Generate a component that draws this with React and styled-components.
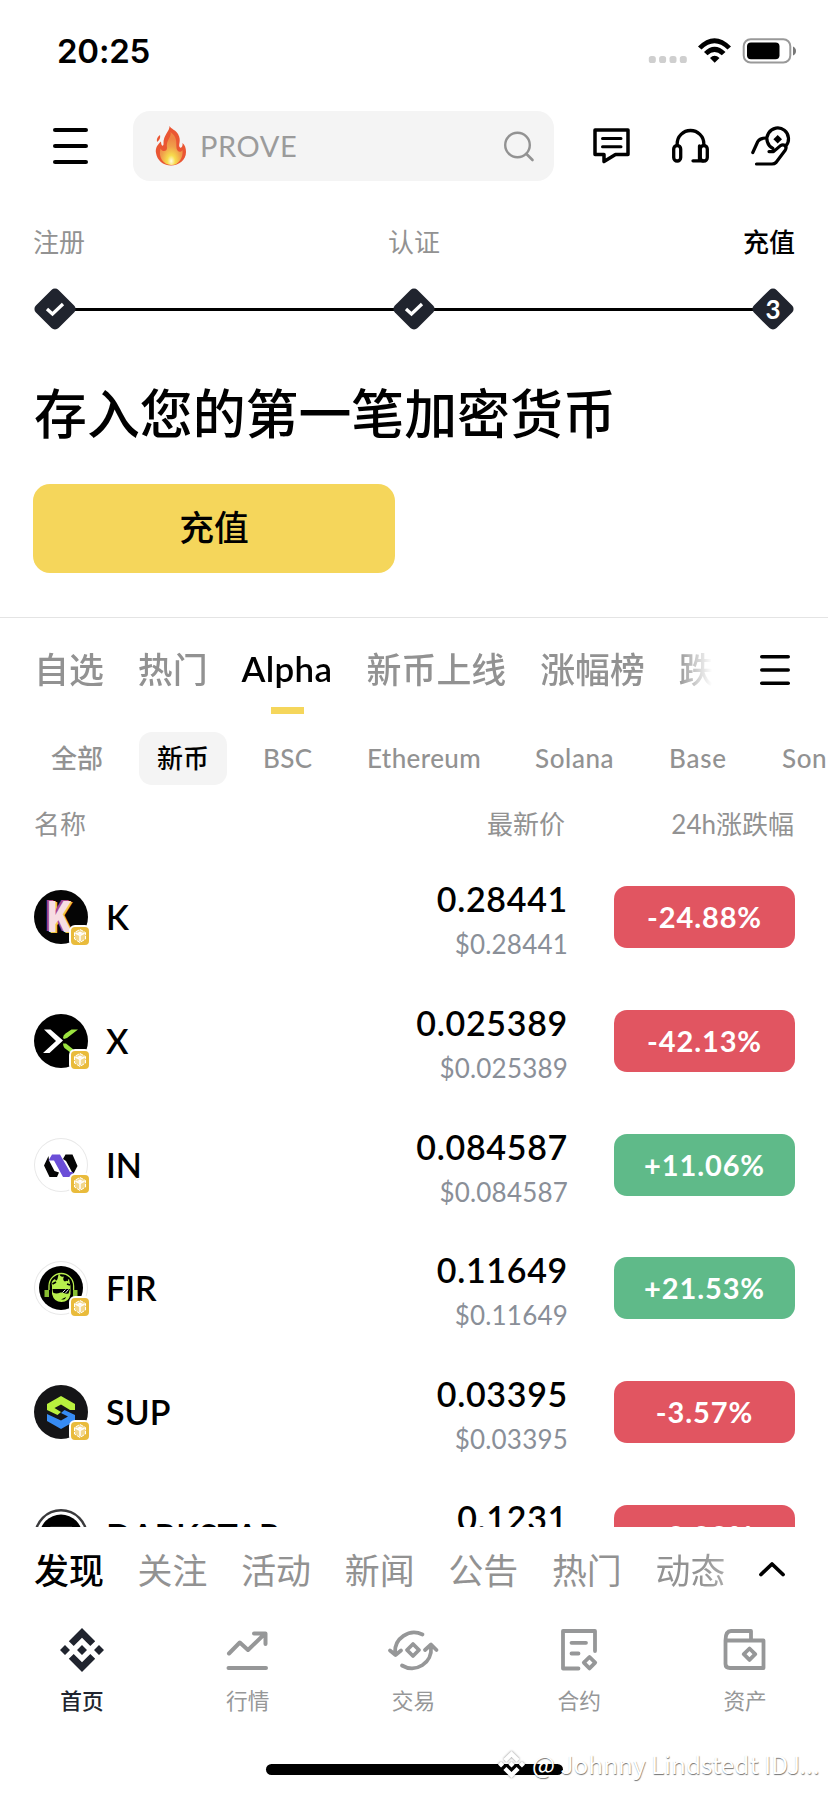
import React from "react";
import styled, { createGlobalStyle, css } from "styled-components";

const Global = createGlobalStyle`
  * { box-sizing: border-box; }
  body { margin: 0; background: #fff; }
  svg { display: block; flex: none; overflow: visible; }
  button { border: 0; padding: 0; background: none; font: inherit; color: inherit; }
`;

const cjk = `"Noto Sans CJK SC", sans-serif`;
const latin = `Lato, "Noto Sans CJK SC", sans-serif`;
const grey = "#929292";

const Screen = styled.div`
  width: 828px;
  height: 1793px;
  overflow: hidden;
  position: relative;
  background: #fff;
  color: #000;
  font-family: ${cjk};
  display: flex;
  flex-direction: column;
`;

const StatusBar = styled.header`
  height: 102px;
  flex: none;
  display: flex;
  justify-content: space-between;
  padding: 0 31px 0 57px;
`;
const Clock = styled.div`
  font: 580 33px/102px Inter, sans-serif;
  letter-spacing: -0.2px;
`;

const TopBar = styled.div`
  height: 88px;
  flex: none;
  display: flex;
  align-items: center;
  padding-left: 53px;
`;
const SearchBox = styled.div`
  width: 421px;
  height: 70px;
  margin: 0 39px 0 45px;
  padding: 0 20px 0 22px;
  border-radius: 17px;
  background: #f4f4f4;
  display: flex;
  align-items: center;
`;
const SearchText = styled.span`
  flex: 1;
  margin-left: 13px;
  font: 400 29px/70px ${latin};
  letter-spacing: 0.6px;
  color: #9b9b9b;
`;
const Actions = styled.div`
  display: flex;
  align-items: center;
  gap: 42px;
`;

const Onboarding = styled.section`
  height: 428px;
  flex: none;
  padding: 32px 33px 0;
  border-bottom: 1px solid #e4e4e4;
`;
const StepLabels = styled.div`
  display: grid;
  grid-template-columns: 1fr 1fr 1fr;
  font-size: 26px;
  line-height: 38px;
  color: ${grey};
`;
const StepLabel = styled.span`
  text-align: ${(p) => p.$align};
  ${(p) => p.$current && css`color: #000; font-weight: 500;`}
`;
const StepTrack = styled.div`
  display: flex;
  align-items: center;
  height: 42px;
  margin: 28px 1px 0 1px;
`;
const StepLine = styled.div`
  flex: 1;
  height: 3px;
  margin: 0 -2px;
  background: #000;
`;
const StepMark = styled.div`
  width: 42px;
  height: 42px;
  display: grid;
  place-items: center;
  > * { grid-area: 1 / 1; }
`;
const Rhomb = styled.span`
  width: 32px;
  height: 32px;
  border-radius: 5px;
  background: #20242e;
  transform: rotate(45deg);
`;
const StepNumber = styled.span`
  z-index: 1;
  color: #fff;
  font: 700 26px/42px ${latin};
`;
const Title = styled.h1`
  margin: 43px 0 0 1px;
  font-size: 52.9px;
  line-height: 76px;
  font-weight: 500;
  white-space: nowrap;
`;
const DepositButton = styled.button`
  display: block;
  width: 362px;
  height: 89px;
  margin-top: 35px;
  border-radius: 17px;
  background: #f5d65b;
  font: 500 34.8px/84px ${cjk};
  padding-bottom: 5px;
  text-align: center;
`;

const MarketTabs = styled.nav`
  height: 107px;
  flex: none;
  display: flex;
  padding-left: 34px;
  font-size: 34.9px;
  line-height: 100px;
  color: ${grey};
`;
const TabStrip = styled.div`
  display: flex;
  gap: 34px;
  width: 679px;
  overflow: hidden;
  mask-image: linear-gradient(90deg, #000 643px, transparent 678px);
`;
const Tab = styled.span`
  flex: none;
  font-weight: ${(p) => (p.$active ? 600 : 500)};
  ${(p) => p.$active && css`
    color: #000;
    font-family: ${latin};
    line-height: 102px;
    letter-spacing: 0.3px;
    width: 91px;
    position: relative;
    &::after {
      content: "";
      position: absolute;
      left: 29px;
      bottom: 11px;
      width: 33px;
      height: 7px;
      background: #f5d65b;
    }
  `}
`;
const TabMenu = styled.button`
  margin: 37px 0 0 47px;
  height: 30px;
  color: #000;
`;

const Filters = styled.div`
  display: flex;
  flex: none;
  gap: 18px;
  height: 66px;
  padding: 7px 0 0 33px;
`;
const Pill = styled.span`
  flex: none;
  height: 53px;
  padding: 0 18px;
  border-radius: 13px;
  font: 500 26px/53px ${latin};
  letter-spacing: ${(p) => p.$ls || 0}px;
  width: ${(p) => p.$w}px;
  color: ${grey};
  white-space: nowrap;
  ${(p) => p.$active && css`background: #f4f4f4; color: #000;`}
`;

const TableHead = styled.div`
  height: 65px;
  flex: none;
  padding: 0 34px;
  display: grid;
  grid-template-columns: 1fr 262px 229px;
  font: 400 26px/66px ${latin};
  color: ${grey};
  > :not(:first-child) { text-align: right; }
`;

const List = styled.div`
  height: 671px;
  flex: none;
  overflow: hidden;
`;
const Row = styled.div`
  height: 123.7px;
  padding: 0 33px 1px 34px;
  display: grid;
  grid-template-columns: 72px minmax(0, 1fr) 301px 226px;
  align-items: center;
`;
const Coin = styled.div`
  position: relative;
  width: 54px;
  height: 54px;
`;
const ChainBadge = styled.span`
  position: absolute;
  left: 35px;
  top: 35px;
  width: 22px;
  height: 22px;
  border: 2px solid #fff;
  border-radius: 6px;
  background: #e9bb3b;
`;
const Disc = styled.div`
  width: 54px;
  height: 54px;
  border-radius: 50%;
  overflow: hidden;
  background: ${(p) => p.$bg};
  ${(p) => p.$ring && css`box-shadow: inset 0 0 0 1px #e8e8e8;`}
  display: grid;
  place-items: center;
`;
const KMark = styled.span`
  font: 900 42px/54px Inter, sans-serif;
  transform: translate(-1px, 0) scaleX(0.78);
  color: #f7dde2;
  text-shadow: -3px -1px 0 #a9468a, 2px 1px 0 #edc545;
`;
const Symbol = styled.span`
  font: 600 34px/54px ${latin};
  white-space: nowrap;
`;
const Quote = styled.div`
  display: flex;
  flex-direction: column;
  align-items: flex-end;
  padding: 8px 1px 0 0;
`;
const Price = styled.span`
  font: 600 34px/46px ${latin};
  letter-spacing: 0.7px;
`;
const Fiat = styled.span`
  font: 400 26px/44px ${latin};
  letter-spacing: 0.2px;
  color: #8a8f98;
`;
const Change = styled.span`
  justify-self: end;
  width: 181px;
  height: 62px;
  border-radius: 13px;
  background: ${(p) => (p.$up ? "#5fba89" : "#e15561")};
  color: #fff;
  font: 700 29px/62px ${latin};
  letter-spacing: 0.9px;
  text-align: center;
`;

const FeedTabs = styled.nav`
  height: 84px;
  flex: none;
  display: flex;
  gap: 33.8px;
  padding-left: 34px;
  font-size: 34.9px;
  line-height: 84px;
  color: ${grey};
`;
const FeedTab = styled.span`
  ${(p) => p.$active && css`color: #000; font-weight: 500;`}
  ${(p) => p.$fade && css`
    background: linear-gradient(90deg, ${grey} 60%, #aaa);
    background-clip: text;
    color: transparent;
  `}
`;

const BottomNav = styled.nav`
  flex: none;
  height: 153px;
  display: grid;
  grid-template-columns: repeat(5, 1fr);
  padding-top: 17px;
  margin-left: -1px;
`;
const NavItem = styled.div`
  display: flex;
  flex-direction: column;
  align-items: center;
  gap: 13px;
  font-size: 21.7px;
  line-height: 30px;
  color: ${(p) => (p.$active ? "#20242e" : "#969798")};
  font-weight: ${(p) => (p.$active ? 500 : 400)};
`;
const HomeBar = styled.div`
  flex: none;
  width: 297px;
  height: 11px;
  border-radius: 6px;
  background: #000;
  margin-left: 266px;
`;
const Watermark = styled.div`
  position: absolute;
  left: 498px;
  top: 1746px;
  display: flex;
  align-items: center;
  gap: 7px;
  color: #fff;
  font: 400 24.4px/36px ${cjk};
  white-space: nowrap;
  text-shadow: 0.5px 0.5px 1px rgba(0, 0, 0, 0.55);
  svg { filter: drop-shadow(0.5px 0.5px 1px rgba(0, 0, 0, 0.5)); }
`;

const stroke = (w, c = "currentColor") => ({
  fill: "none", stroke: c, strokeWidth: w, strokeLinecap: "round", strokeLinejoin: "round",
});

const StatusIcons = () => (
  <svg width="148" height="102" viewBox="649 0 148 102">
    {[652.3, 662.6, 673, 683.3].map((x) => (
      <rect key={x} x={x - 3.5} y="56" width="7" height="7" rx="2.6" fill="#cfcfcf" />
    ))}
    <path d="M698 46.5Q714.500 30 731 46.500L727.500 49.500Q714.500 37 701.500 49.500ZM704 52Q714.500 41.500 725.500 52L721.800 55.300Q714.500 48.500 707.500 55.300ZM710 58Q714.500 53.500 719.500 58L714.700 62.800Z" fill="#000" />
    <rect x="743.700" y="39.200" width="46.600" height="23.300" rx="7" fill="none" stroke="#999" strokeWidth="2" />
    <rect x="747" y="42.500" width="32.500" height="16.700" rx="4" fill="#000" />
    <path d="M793 46.500q3 1.500 3 4.500t-3 4.500z" fill="#777" />
  </svg>
);

const MenuIcon = ({ w, h, t }) => (
  <svg width={w} height={h}>
    {[t / 2, h / 2, h - t / 2].map((y) => (
      <path key={y} d={`M${t / 2} ${y}H${w - t / 2}`} {...stroke(t)} />
    ))}
  </svg>
);

const Flame = () => (
  <svg width="32" height="40" viewBox="0 0 32 40">
    <defs>
      <radialGradient id="fl" cx=".5" cy=".88" r=".8">
        <stop offset="0" stopColor="#fffbe0" />
        <stop offset=".22" stopColor="#f7dc4d" />
        <stop offset=".55" stopColor="#f0a04b" />
        <stop offset=".85" stopColor="#ee8544" />
      </radialGradient>
    </defs>
    <path d="M14.500 0C15 5 8 9 8.500 18C8.500 21 6 20 6 15.500C3 18 0 22 1 27C2 34 8 39.500 16 39.500S31 34 31 26C31 22 30 19 27.500 17C28 20 26.500 22.500 25 21.500C22.500 19 27 15 23 8C21 4 16 3 14.500 0Z" fill="#ea5633" />
    <path d="M15.500 6C17 11 10.500 14 12 22C12 26 7 26 5.500 22.500C3 31 8 38.500 16 39S28.500 31 27.500 24C26 27 22 26 21.500 22C21 16 22.500 11 15.500 6Z" fill="url(#fl)" />
    <path d="M5 9q-4 3-3 7q4-3 3-7z" fill="#ea5633" />
  </svg>
);

const SearchIcon = () => (
  <svg width="30" height="30" viewBox="0 0 30 30">
    <circle cx="13.500" cy="14" r="12.300" {...stroke(2.4, "#929292")} />
    <path d="M22.500 23L28.500 29" {...stroke(2.6, "#929292")} />
  </svg>
);
const ChatIcon = () => (
  <svg width="37" height="36" viewBox="0 0 37 36">
    <path d="M2 2H35V26.500H22.500L11 33.500V26.500H2Z" {...stroke(3.5)} />
    <path d="M9.500 10.500H28M9.500 18.800H28" {...stroke(3)} />
  </svg>
);
const HeadsetIcon = () => (
  <svg width="37" height="34" viewBox="0 0 37 34">
    <rect x="1.700" y="16.500" width="7" height="15.500" rx="3.500" {...stroke(3.3)} />
    <rect x="28.300" y="16.500" width="7" height="15.500" rx="3.500" {...stroke(3.3)} />
    <path d="M5.200 16V14.500A13.300 13 0 0 1 31.800 14.500V16M27.500 17V31.800M21 31.800H31" {...stroke(3.3)} />
  </svg>
);
const HandIcon = () => (
  <svg width="39" height="39" viewBox="0 0 39 39">
    <path d="M34.500 19.300A10.800 10.800 0 1 0 22 21.500" {...stroke(3.2)} />
    <path d="M26.700 7.900L31 12.200L26.700 16.500L22.400 12.200Z" fill="#000" />
    <path d="M1.800 25.500L6.800 14.500Q9 11 15 11M18 24.600H22.500L29.500 18.600Q32 17.200 34.300 18.800Q36 20.500 34 23.500L25 35.500Q23.500 37 21 37H5.500" {...stroke(3.2)} />
  </svg>
);
const Tick = styled.svg`
  z-index: 1;
`;
const Check = () => (
  <Tick width="20" height="16" viewBox="0 0 20 16">
    <path d="M2 8L7.500 13L18 3" fill="none" stroke="#fff" strokeWidth="3.300" />
  </Tick>
);
const Cube = () => (
  <svg width="18" height="18" viewBox="0 0 18 18">
    <path d="M9 2.500L14.500 5.500V12L9 15.500L3.500 12V5.500Z" fill="#fff" fillOpacity=".4" stroke="#fff" strokeWidth="1" strokeDasharray="3.800 1" />
    <path d="M4.500 6L9 8.500L13.500 6M9 8.500V14" fill="none" stroke="#fff" strokeWidth="1.500" />
    <path d="M9 4.500L12 6L9 7.500L6 6Z" fill="#fff" />
  </svg>
);

const marks = {
  K: <Disc $bg="#050505"><KMark>K</KMark></Disc>,
  X: (
    <Disc $bg="#000">
      <svg width="54" height="54">
        <path d="M10 15.500H16.500L29 26.500L15.500 39H9L22 27Z" fill="#fff" />
        <path d="M29 24Q29 21 31.500 19.500L37.500 15.500H44L33 24L30 25ZM29 29.500H32L40 36L37 39L30.500 34Q29 32 29 29.500Z" fill="#9be33f" />
      </svg>
    </Disc>
  ),
  IN: (
    <Disc $bg="#fff" $ring>
      <svg width="54" height="54">
        <path d="M14.500 18L10 27.500L15.500 39H23L25 34.500L20.500 33L15 22.500ZM29 21L31.500 16.500H38.500L43.500 28L38 38.500L35 34H38L32 23Z" fill="#050505" />
        <path d="M14.500 22.500L18 16.500H26L36 34H39.500L37 39H29L20 22.500Z" fill="#6b4ed8" />
      </svg>
    </Disc>
  ),
  FIR: (
    <Disc $bg="#fff" $ring>
      <svg width="54" height="54">
        <circle cx="27" cy="27" r="22" fill="#000" />
        <path d="M15 29V25A12.300 12.500 0 0 1 39.600 25V29" fill="none" stroke="#b9ef4d" strokeWidth="1.300" />
        <path d="M10.500 29h4.500v7h-4.500zM39 29h4.500v7h-4.500z" fill="#87bd32" />
        <path d="M18 33V25Q16.500 20 21 18Q22 21 23.500 18L25 11.500Q26 17 30 15.500Q28 19 31 20.500L35 18L36.500 25V33Q35 41 27.500 41T18 33Z" fill="#b9ef4d" />
        <path d="M18.500 28H36L34.500 32.500Q31 33 28.500 31.500H26.500Q22 33.500 19 31.500ZM27 38.500L32 36Q31.500 39 27 38.500Z" fill="#000" />
        <path d="M28.500 31.500l3-3M31.500 32l3-3.500" stroke="#eee" strokeWidth="1" />
        <path d="M18.500 23l3.500-2M33 23l3 1M31 18l3 1.500" fill="none" stroke="#000" strokeWidth="1.800" />
      </svg>
    </Disc>
  ),
  SUP: (
    <Disc $bg="#151517">
      <svg width="54" height="54">
        <path d="M27 11L41 19V25H36L27 19.500L20.500 23L27 27L23.500 30L13 25V19Z" fill="#b9f13e" />
        <path d="M13 29L27 35.500L34 31.500L27 28L30.500 25L41 30V36L27 44L13 36Z" fill="#378cf4" />
      </svg>
    </Disc>
  ),
  DARKSTAR: (
    <Disc $bg="#3a3a3c">
      <svg width="54" height="54">
        <circle cx="27" cy="27" r="24.500" fill="#fff" />
        <circle cx="27" cy="27" r="21.500" fill="#000" />
        <path d="M16 17.500H38V20H19Z" fill="#444" />
      </svg>
    </Disc>
  ),
};

const coins = [
  ["K", "0.28441", "-24.88%"],
  ["X", "0.025389", "-42.13%"],
  ["IN", "0.084587", "+11.06%"],
  ["FIR", "0.11649", "+21.53%"],
  ["SUP", "0.03395", "-3.57%"],
  ["DARKSTAR", "0.1231", "-9.99%"],
];

const BinanceMark = ({ size }) => (
  <svg width={size} height={size} viewBox="0 0 44 44" fill="currentColor">
    <path d="M22 0L35.200 13.200L30.300 18.100L22 9.800L13.700 18.100L8.800 13.200ZM22 44L8.800 30.800L13.700 25.900L22 34.200L30.300 25.900L35.200 30.800ZM5 17L10 22L5 27L0 22ZM39 17L44 22L39 27L34 22ZM22 17L27 22L22 27L17 22Z" />
  </svg>
);
const TrendIcon = () => (
  <svg width="44" height="44" viewBox="0 0 44 44">
    <path d="M3 25.500L13.800 14.500L22 22L38.500 6M28 5.500H39.500V16M2.500 40H40" {...stroke(4)} />
  </svg>
);
const TradeIcon = () => (
  <svg width="50" height="44" viewBox="0 0 50 44">
    <path d="M34.500 6.500A19.200 19.200 0 0 0 7 25M2 22.500L7.500 27L13 22.500M14 37.500A19.200 19.200 0 0 0 43 19M37 22L43 16.500L48.500 22" {...stroke(3.8)} />
    <path d="M25 16L31 22L25 28L19 22Z" {...stroke(3.8)} />
  </svg>
);
const FuturesIcon = () => (
  <svg width="44" height="44" viewBox="0 0 44 44">
    <path d="M38 23V3H6V40.500H21.500M14.500 14.800H29M14.500 25.500H21.500M32.500 29L38.200 34.700L32.500 40.400L26.800 34.700Z" {...stroke(3.8)} />
  </svg>
);
const WalletIcon = () => (
  <svg width="44" height="44" viewBox="0 0 44 44">
    <path d="M2.500 12V36Q2.500 40 7 40H40.500V12.500H2.500Q2.500 3 8 3H28V11M26.500 20.500L32.200 26.200L26.500 31.900L20.800 26.200Z" {...stroke(3.8)} />
  </svg>
);

const navItems = [
  ["首页", <BinanceMark size={44} />],
  ["行情", <TrendIcon />],
  ["交易", <TradeIcon />],
  ["合约", <FuturesIcon />],
  ["资产", <WalletIcon />],
];

export default function App() {
  return (
    <Screen lang="zh-CN">
      <Global />
      <StatusBar>
        <Clock>20:25</Clock>
        <StatusIcons />
      </StatusBar>
      <TopBar>
        <MenuIcon w={35} h={36} t={4.1} />
        <SearchBox>
          <Flame />
          <SearchText>PROVE</SearchText>
          <SearchIcon />
        </SearchBox>
        <Actions>
          <ChatIcon />
          <HeadsetIcon />
          <HandIcon />
        </Actions>
      </TopBar>

      <Onboarding>
        <StepLabels>
          <StepLabel $align="left">注册</StepLabel>
          <StepLabel $align="center">认证</StepLabel>
          <StepLabel $align="right" $current>充值</StepLabel>
        </StepLabels>
        <StepTrack>
          <StepMark><Rhomb /><Check /></StepMark>
          <StepLine />
          <StepMark><Rhomb /><Check /></StepMark>
          <StepLine />
          <StepMark><Rhomb /><StepNumber>3</StepNumber></StepMark>
        </StepTrack>
        <Title>存入您的第一笔加密货币</Title>
        <DepositButton>充值</DepositButton>
      </Onboarding>

      <MarketTabs>
        <TabStrip>
          <Tab>自选</Tab>
          <Tab>热门</Tab>
          <Tab $active>Alpha</Tab>
          <Tab>新币上线</Tab>
          <Tab>涨幅榜</Tab>
          <Tab>跌</Tab>
        </TabStrip>
        <TabMenu><MenuIcon w={30} h={30} t={3.5} /></TabMenu>
      </MarketTabs>

      <Filters>
        <Pill $w={88}>全部</Pill>
        <Pill $w={88} $active>新币</Pill>
        <Pill $w={86} $ls={0.4}>BSC</Pill>
        <Pill $w={150} $ls={0.4}>Ethereum</Pill>
        <Pill $w={116} $ls={0.6}>Solana</Pill>
        <Pill $w={95} $ls={0.8}>Base</Pill>
        <Pill $w={100} $ls={0.6}>Son</Pill>
      </Filters>

      <TableHead>
        <span>名称</span>
        <span>最新价</span>
        <span>24h涨跌幅</span>
      </TableHead>

      <List>
        {coins.map(([name, price, change]) => (
          <Row key={name}>
            <Coin>
              {marks[name]}
              <ChainBadge><Cube /></ChainBadge>
            </Coin>
            <Symbol>{name}</Symbol>
            <Quote>
              <Price>{price}</Price>
              <Fiat>${price}</Fiat>
            </Quote>
            <Change $up={change[0] === "+"}>{change}</Change>
          </Row>
        ))}
      </List>

      <FeedTabs>
        <FeedTab $active>发现</FeedTab>
        <FeedTab>关注</FeedTab>
        <FeedTab>活动</FeedTab>
        <FeedTab>新闻</FeedTab>
        <FeedTab>公告</FeedTab>
        <FeedTab>热门</FeedTab>
        <FeedTab $fade>动态</FeedTab>
        <svg width="26" height="84" viewBox="0 0 26 84">
          <path d="M2 47.500L13 37L24 47.500" {...stroke(3.8, "#000")} />
        </svg>
      </FeedTabs>

      <BottomNav>
        {navItems.map(([label, icon], i) => (
          <NavItem key={label} $active={i === 0}>
            {icon}
            <span>{label}</span>
          </NavItem>
        ))}
      </BottomNav>
      <HomeBar />
      <Watermark>
        <BinanceMark size={27} />
        <span>@ Johnny Lindstedt IDJ...</span>
      </Watermark>
    </Screen>
  );
}
